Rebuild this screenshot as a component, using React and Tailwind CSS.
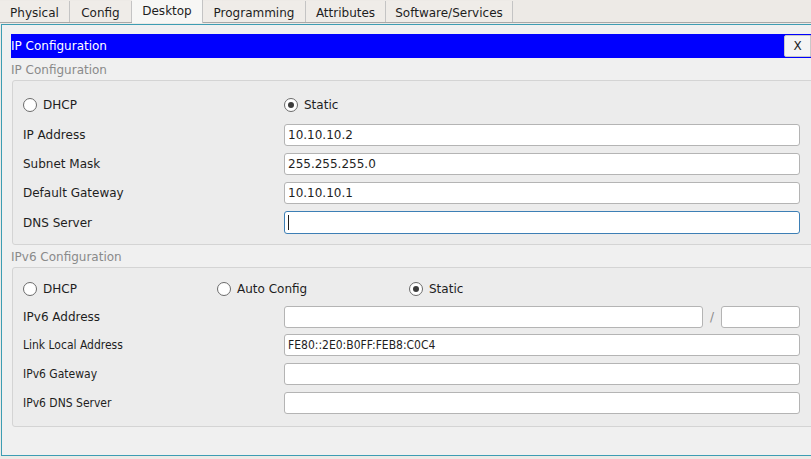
import { useState } from 'react';

const tabs = [
  { name: 'Physical', w: 'w-[70px]' },
  { name: 'Config', w: 'w-[62px]' },
  { name: 'Desktop', w: 'w-[71px]' },
  { name: 'Programming', w: 'w-[103px]' },
  { name: 'Attributes', w: 'w-[80px]' },
  { name: 'Software/Services', w: 'w-[127px]' },
];

const Radio = ({ label, checked, onClick }) => (
  <button type="button" onClick={onClick} className="flex items-center gap-[6px] text-[12px] text-[#1e1e1e]">
    <span className="w-[14px] h-[14px] rounded-full border border-[#6b6b6b] bg-white flex items-center justify-center">
      {checked && <span className="w-[6px] h-[6px] rounded-full bg-[#3c3c3c]"></span>}
    </span>
    {label}
  </button>
);

const Field = ({ value, condensed }) => (
  <input
    readOnly
    value={value}
    className={`block h-[22px] w-full rounded-[3px] border border-[#b4b4b4] bg-white px-[3px] text-[12px] text-[#1e1e1e] outline-none ${
      condensed ? 'font-[DejaVu_Sans_Condensed]' : ''
    }`}
  />
);

// focused field with a visible caret
const FocusedField = () => (
  <div className="flex h-[23px] w-full items-center rounded-[3px] border border-[#3d7fb5] bg-white px-[3px]">
    <span className="h-[15px] w-[1px] bg-[#1e1e1e]"></span>
  </div>
);

const Row = ({ label, children, condensed }) => (
  <div className="flex items-center">
    <span className={`w-[261px] text-[12px] leading-[14px] text-[#1e1e1e] ${condensed ? 'font-[DejaVu_Sans_Condensed]' : ''}`}>{label}</span>
    <div className="w-[516px]">{children}</div>
  </div>
);

export default function App() {
  const [mode4, setMode4] = useState('static');
  const [mode6, setMode6] = useState('static');

  return (
    <div className="w-[811px] h-[459px] overflow-hidden bg-[#edeae6] font-['DejaVu_Sans',sans-serif]">
      {/* Tabs */}
      <div className="flex h-[23px] border-b border-[#a8a8a8]">
        {tabs.map((t) =>
          t.name === 'Desktop' ? (
            <div key={t.name} className={`${t.w} h-[23px] bg-[#f7f7f5] border-r border-[#c4c4c4] flex items-center justify-center text-[12px] text-[#1e1e1e] pb-[2px]`}>
              {t.name}
            </div>
          ) : (
            <div key={t.name} className={`${t.w} mt-[1px] h-[21px] bg-[#efece8] border-r border-[#c4c4c4] flex items-center justify-center text-[12px] text-[#1e1e1e] pt-[2px]`}>
              {t.name}
            </div>
          )
        )}
      </div>

      {/* Panel */}
      <div className="ml-[1px] mt-[1px] h-[432px] border-l border-t border-b border-[#3d9db3] bg-[#f0f0f0] pl-[9px] pt-[9px]">
        <div className="flex h-[24px] bg-[#0000ff] items-center">
          <span className="flex-1 text-[12px] text-white">IP Configuration</span>
          <button className="w-[27px] h-[22px] bg-[#f4f4f4] border border-[#c8c8c8] rounded-l-[2px] text-[12px] text-[#1e1e1e]">X</button>
        </div>
        <div className="h-[22px] flex items-center pt-[2px] text-[12px] text-[#8a8a8a]">IP Configuration</div>

        <div className="ml-[1px] w-[812px] h-[165px] border border-[#d4d4d4] rounded-[3px] bg-[#ececec] pl-[10px] pt-[16px]">
          <div className="flex items-center h-[16px]">
            <div className="w-[261px]">
              <Radio label="DHCP" checked={mode4 === 'dhcp'} onClick={() => setMode4('dhcp')} />
            </div>
            <Radio label="Static" checked={mode4 === 'static'} onClick={() => setMode4('static')} />
          </div>
          <div className="mt-[11px] flex flex-col gap-[7px]">
            <Row label="IP Address"><Field value="10.10.10.2" /></Row>
            <Row label="Subnet Mask"><Field value="255.255.255.0" /></Row>
            <Row label="Default Gateway"><Field value="10.10.10.1" /></Row>
            <Row label="DNS Server"><FocusedField /></Row>
          </div>
        </div>

        <div className="h-[22px] flex items-center pt-[2px] text-[12px] text-[#8a8a8a]">IPv6 Configuration</div>

        <div className="ml-[1px] w-[812px] h-[160px] border border-[#d4d4d4] rounded-[3px] bg-[#ececec] pl-[10px] pt-[13px]">
          <div className="flex items-center h-[16px]">
            <div className="w-[194px]">
              <Radio label="DHCP" checked={mode6 === 'dhcp'} onClick={() => setMode6('dhcp')} />
            </div>
            <div className="w-[192px]">
              <Radio label="Auto Config" checked={mode6 === 'auto'} onClick={() => setMode6('auto')} />
            </div>
            <Radio label="Static" checked={mode6 === 'static'} onClick={() => setMode6('static')} />
          </div>
          <div className="mt-[9px] flex flex-col gap-[7px]">
            <div className="-mb-[1px]">
              <Row label="IPv6 Address">
                <div className="flex items-center">
                  <div className="w-[419px]"><Field value="" /></div>
                  <span className="w-[18px] text-center text-[12px] text-[#8a8a8a]">/</span>
                  <div className="w-[79px]"><Field value="" /></div>
                </div>
              </Row>
            </div>
            <Row label="Link Local Address" condensed><Field value="FE80::2E0:B0FF:FEB8:C0C4" condensed /></Row>
            <Row label="IPv6 Gateway" condensed><Field value="" /></Row>
            <Row label="IPv6 DNS Server" condensed><Field value="" /></Row>
          </div>
        </div>
      </div>
    </div>
  );
}
